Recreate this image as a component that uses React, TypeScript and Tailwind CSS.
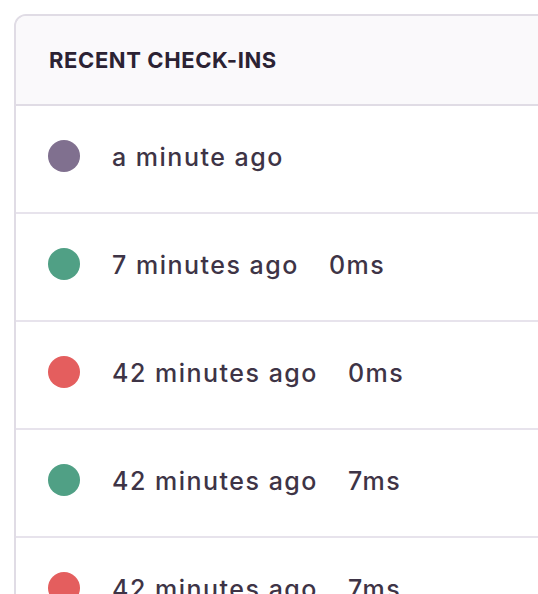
import React from "react";

const rows = [
  { color: "bg-[#80708F]", time: "a minute ago", dur: "" },
  { color: "bg-[#50A085]", time: "7 minutes ago", dur: "0ms" },
  { color: "bg-[#E45E5E]", time: "42 minutes ago", dur: "0ms" },
  { color: "bg-[#50A085]", time: "42 minutes ago", dur: "7ms" },
  { color: "bg-[#E45E5E]", time: "42 minutes ago", dur: "7ms" },
];

export default function App() {
  return (
    <div
      className="w-[538px] h-[594px] overflow-hidden bg-white"
      style={{ fontFamily: "Inter, 'Noto Sans', sans-serif" }}
    >
      <div className="ml-[14px] mt-[14px] w-[640px] rounded-tl-[12px] border-2 border-[#E0DCE5] bg-white">
        <div className="flex h-[90px] items-center rounded-tl-[10px] border-b-2 border-[#E0DCE5] bg-[#FAF9FB] pl-[33px]">
          <span className="text-[22px] font-bold tracking-[0.6px] text-[#2B2233]">
            RECENT CHECK-INS
          </span>
        </div>
        {rows.map((r, i) => (
          <div
            key={i}
            className="flex h-[108px] items-center border-b-2 border-[#E7E3EC] pb-[6px] pl-[32px]"
          >
            <span className={`h-[32px] w-[32px] shrink-0 rounded-full ${r.color}`} />
            <span className="ml-[32px] translate-y-[2px] text-[25px] font-[450] tracking-[1.5px] text-[#3E3446]">
              {r.time}
            </span>
            {r.dur && (
              <span className="ml-[30px] translate-y-[2px] text-[25px] font-[450] tracking-[1.5px] text-[#3E3446]">
                {r.dur}
              </span>
            )}
          </div>
        ))}
      </div>
    </div>
  );
}
